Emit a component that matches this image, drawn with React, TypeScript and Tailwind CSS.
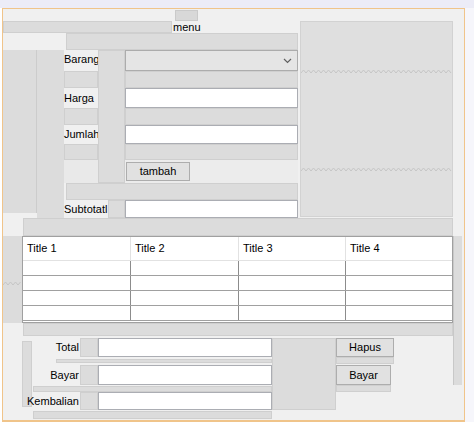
import React from 'react';

const font = { fontFamily: '"Liberation Sans", Arial, sans-serif' };

// NetBeans-style filler zigzag
const Zig: React.FC<{ w: number }> = ({ w }) => {
  const pts: string[] = [];
  for (let x = 0, i = 0; x <= w; x += 2.5, i++) pts.push(`${x},${i % 2 ? 1 : 4}`);
  return (
    <svg width={w} height={5} className="block">
      <polyline points={pts.join(' ')} fill="none" stroke="#c6c6c6" strokeWidth="1" />
    </svg>
  );
};

const fill = 'bg-[#dcdcdc] border border-[#cfcfcf]';
const input = 'bg-white border border-[#abadb3]';
const btn = 'bg-[#e1e1e1] border border-[#adadad] flex items-center justify-center text-[11px] text-black';

const App: React.FC = () => {
  const titles = ['Title 1', 'Title 2', 'Title 3', 'Title 4'];

  return (
    <div className="w-[474px] h-[432px] bg-white overflow-hidden" style={font}>
      <div className="h-[8px] bg-[#ececf7]" />
      <div className="flex">
        <div className="w-[2px]" />
        <div className="w-[463px] border border-[#f0c48a] border-b-2 bg-[#f0f0f0] flex flex-col">
          {/* top form */}
          <div className="grid grid-cols-[34px_27px_34px_10px_17px_47px_27px_99px_2px_153px_1fr] grid-rows-[12px_12px_17px_21px_17px_20px_17px_19px_16px_23px_17px_17px_1px] text-[11px] text-black">
            <div className="col-start-7 col-end-8 row-start-1 row-end-2 ml-[3px] mr-[1px] mt-[1px] bg-[#d8d8d8] border border-[#cacaca]" />
            <div className={`col-start-1 col-end-7 row-start-2 row-end-3 ${fill}`} />
            <div className="col-start-7 col-end-9 row-start-2 row-end-3 pl-[1px] leading-[12px]">menu</div>
            <div className="col-start-10 col-end-11 row-start-2 row-end-13 bg-[#dfdfdf] border border-[#d2d2d2] flex flex-col pt-[47px]">
              <Zig w={151} />
              <div className="h-[93px]" />
              <Zig w={151} />
            </div>
            <div className={`col-start-3 col-end-9 row-start-3 row-end-4 ml-[2px] ${fill}`} />

            <div className="col-start-1 col-end-2 row-start-4 row-end-13 mb-[4px] bg-[#dcdcdc] border-r border-[#cccccc]" />
            <div className="col-start-2 col-end-3 row-start-4 row-end-14 bg-[#dcdcdc]" />

            <div className="col-start-3 col-end-4 row-start-4 row-end-5 pt-[2px] leading-[14px]">Barang</div>
            <div className={`col-start-3 col-end-4 row-start-5 row-end-6 ${fill}`} />
            <div className="col-start-3 col-end-4 row-start-6 row-end-7 flex items-center">Harga</div>
            <div className={`col-start-3 col-end-4 row-start-7 row-end-8 ${fill}`} />
            <div className="col-start-3 col-end-4 row-start-8 row-end-9 flex items-center">Jumlah</div>
            <div className={`col-start-3 col-end-4 row-start-9 row-end-10 ${fill}`} />
            <div className="col-start-3 col-end-4 row-start-10 row-end-11 bg-[#e9e9e9]" />

            <div className={`col-start-4 col-end-6 row-start-4 row-end-11 ${fill}`} />

            <div className="col-start-6 col-end-9 row-start-4 row-end-5 bg-[#e5e5e5] border border-[#acacac] flex items-center justify-end pr-[5px]">
              <svg width="9" height="6" viewBox="0 0 9 6">
                <polyline points="1,1 4.5,4.5 8,1" fill="none" stroke="#606060" strokeWidth="1.2" />
              </svg>
            </div>
            <div className={`col-start-6 col-end-9 row-start-5 row-end-6 ${fill}`} />
            <div className={`col-start-6 col-end-9 row-start-6 row-end-7 ${input}`} />
            <div className={`col-start-6 col-end-9 row-start-7 row-end-8 ${fill}`} />
            <div className={`col-start-6 col-end-9 row-start-8 row-end-9 ${input}`} />
            <div className={`col-start-6 col-end-9 row-start-9 row-end-10 ${fill}`} />
            <div className="col-start-6 col-end-9 row-start-10 row-end-11 bg-[#ececec] flex py-[2px] pl-[1px]">
              <div className={`w-[64px] ${btn}`}>tambah</div>
            </div>
            <div className={`col-start-3 col-end-9 row-start-11 row-end-12 ml-[2px] ${fill}`} />

            <div className="col-start-3 col-end-5 row-start-12 row-end-14 flex items-center whitespace-nowrap">Subtotatl</div>
            <div className={`col-start-5 col-end-6 row-start-12 row-end-14 ${fill}`} />
            <div className={`col-start-6 col-end-9 row-start-12 row-end-14 ${input}`} />
          </div>

          {/* table section */}
          <div className="flex flex-col">
            <div className="h-[18px] flex">
              <div className="w-[20px]" />
              <div className={`w-[430px] ${fill}`} />
            </div>
            <div className="h-[87px] flex">
              <div className="w-[19px] bg-[#dcdcdc] flex flex-col pt-[45px]">
                <Zig w={19} />
              </div>
              <div className="w-[431px] border border-[#a0a0a0] bg-white flex flex-col text-[11px] text-black">
                <div className="h-[24px] grid grid-cols-[108px_108px_107px_1fr] border-b border-[#e2e2e2]">
                  {titles.map((t, i) => (
                    <div key={t} className={`flex items-center pl-[4px] ${i < 3 ? 'border-r border-[#e2e2e2]' : ''}`}>
                      {t}
                    </div>
                  ))}
                </div>
                {[0, 1, 2, 3].map(r => (
                  <div key={r} className="h-[15px] grid grid-cols-[108px_108px_107px_1fr] border-b border-[#a0a0a0]">
                    {[0, 1, 2, 3].map(c => (
                      <div key={c} className={c < 3 ? 'border-r border-[#8c8c8c]' : ''} />
                    ))}
                  </div>
                ))}
              </div>
              <div className="w-[9px] bg-[#dcdcdc] border-l border-[#c8c8c8]" />
            </div>
            <div className="h-[13px] flex">
              <div className="w-[20px]" />
              <div className={`w-[430px] ${fill}`} />
              <div className="w-[9px] bg-[#dcdcdc] border-l border-[#c8c8c8]" />
            </div>
          </div>

          {/* bottom form */}
          <div className="grid grid-cols-[19px_10px_24px_24px_18px_174px_64px_58px_59px_9px_1fr] grid-rows-[2px_19px_8px_20px_7px_18px_10px] text-[11px] text-black">
            <div className={`col-start-2 col-end-3 row-start-2 row-end-7 mt-[3px] mb-[3px] ${fill}`} />

            <div className="col-start-3 col-end-5 row-start-2 row-end-3 flex items-center justify-end pr-[1px] whitespace-nowrap">Total</div>
            <div className={`col-start-5 col-end-6 row-start-2 row-end-3 ${fill}`} />
            <div className={`col-start-6 col-end-7 row-start-2 row-end-3 ${input}`} />
            <div className={`col-start-4 col-end-7 row-start-3 row-end-4 my-[2px] ${fill}`} />

            <div className="col-start-3 col-end-5 row-start-4 row-end-5 flex items-center justify-end pr-[1px] whitespace-nowrap">Bayar</div>
            <div className={`col-start-5 col-end-6 row-start-4 row-end-5 ${fill}`} />
            <div className={`col-start-6 col-end-7 row-start-4 row-end-5 ${input}`} />
            <div className={`col-start-3 col-end-7 row-start-5 row-end-6 mt-[1px] ml-[1px] ${fill}`} />

            <div className="col-start-2 col-end-5 row-start-6 row-end-7 flex items-center justify-end pr-[1px] whitespace-nowrap">Kembalian</div>
            <div className={`col-start-5 col-end-6 row-start-6 row-end-7 ${fill}`} />
            <div className={`col-start-6 col-end-7 row-start-6 row-end-7 ${input}`} />
            <div className={`col-start-3 col-end-7 row-start-7 row-end-8 mt-[1px] mb-[1px] ml-[1px] ${fill}`} />

            <div className={`col-start-7 col-end-8 row-start-2 row-end-7 ${fill}`} />

            <div className={`col-start-8 col-end-9 row-start-2 row-end-3 ${btn}`}>Hapus</div>
            <div className={`col-start-8 col-end-9 row-start-3 row-end-4 mb-[1px] ${fill}`} />
            <div className={`col-start-8 col-end-9 row-start-4 row-end-5 mr-[3px] ${btn}`}>Bayar</div>
            <div className={`col-start-8 col-end-9 row-start-5 row-end-6 mr-[3px] ${fill}`} />

            <div className="col-start-10 col-end-11 row-start-1 row-end-5 bg-[#dcdcdc] border-l border-[#c8c8c8]" />
          </div>
        </div>
        <div className="w-[9px] bg-[#f6f6fb]" />
      </div>
    </div>
  );
};

export default App;
